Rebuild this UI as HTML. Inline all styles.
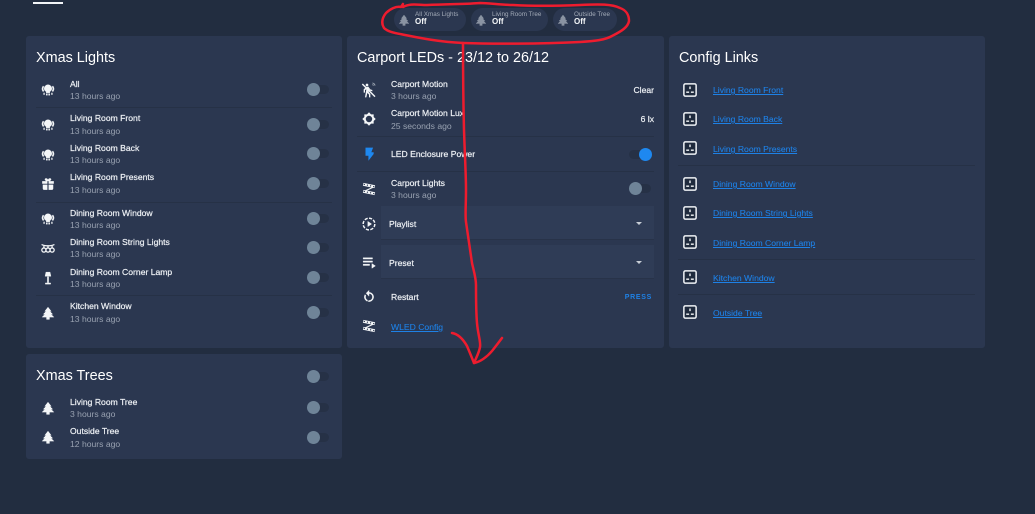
<!DOCTYPE html>
<html><head><meta charset="utf-8">
<style>
html,body{margin:0;padding:0}
body{width:1035px;height:514px;overflow:hidden;position:relative;background:#222d40;font-family:"Liberation Sans",sans-serif;color:#f2f4f7}
.c{position:absolute;background:#2b3750;border-radius:3px}
.h{position:absolute;font-size:14.4px;line-height:20px;color:#fff;white-space:nowrap}
.t{position:absolute;font-size:8.6px;line-height:12px;white-space:nowrap;color:#eef1f5;-webkit-text-stroke:.2px #eef1f5}
.s{position:absolute;font-size:8.6px;line-height:12px;white-space:nowrap;color:#99a2b1}
a.t{color:#1e81e6;text-decoration:underline;-webkit-text-stroke:.1px #1e81e6}
.d{position:absolute;height:1px;background:#263146}
.w{position:absolute;width:22px;height:9px;background:#263146;border-radius:5px}
.w i{position:absolute;left:0;top:-2px;width:13px;height:13px;border-radius:50%;background:#6f8498}
.w.on i{left:10px;background:#1e88f0}
svg.i{position:absolute;width:14px;height:14px;fill:#f4f6f8;stroke:#f4f6f8;stroke-width:.7}
svg.g{fill:#8a93a2;stroke:#8a93a2;width:12px;height:12px}
.sel{position:absolute;left:381px;width:273px;height:34px;background:#2f3c56;border-bottom:1px solid #283349;box-sizing:border-box}
.ar{position:absolute;width:0;height:0;border-left:3.5px solid transparent;border-right:3.5px solid transparent;border-top:3.5px solid #c8ced6}
.chip{position:absolute;top:8px;height:23px;border-radius:12px;background:#2b3750}
.cl{position:absolute;font-size:6.3px;line-height:9px;color:#a3abb8;white-space:nowrap;top:10px}
.cv{position:absolute;font-size:8px;line-height:10px;font-weight:bold;color:#f4f6f8;white-space:nowrap;top:17px}
</style></head>
<body>
<svg width="0" height="0" style="position:absolute">
<defs>
<symbol id="tree" viewBox="0 0 24 24"><path d="M9.500,23V19H2L7,14H4L9,9H6.500L12,2L17.500,9H15L20,14H17L22,19H14.500V23Z"/></symbol>
<symbol id="bulb" viewBox="0 0 24 24"><path d="M12,3A6.500,6.500 0 0,1 18.500,9.500C18.500,12 17,14 15,15V17H9V15C7,14 5.500,12 5.500,9.500A6.500,6.500 0 0,1 12,3M9,18.500H11V21H9V18.500M13,18.500H15V21H13V18.500M3.500,5L5,6.500C3.500,9 3.500,11 5,13.500L3.500,15C1,11.500 1,8.500 3.500,5M20.500,5C23,8.500 23,11.500 20.500,15L19,13.500C20.500,11 20.500,9 19,6.500L20.500,5M4.500,17H6V20H4.500V17M18,17H19.500V20H18V17Z"/></symbol>
<symbol id="gift" viewBox="0 0 24 24"><path d="M2,7H9C7,6 6,5 6.500,3.500C7,2 9.500,1.500 11,3L12,4.500L13,3C14.500,1.500 17,2 17.500,3.500C18,5 17,6 15,7H22V11.500H13V7H11V11.500H2V7M3,13H11V22H5A2,2 0 0,1 3,20V13M13,13H21V20A2,2 0 0,1 19,22H13V13Z" stroke="none"/></symbol>
<symbol id="string" viewBox="0 0 24 24"><g fill="none" stroke="#f4f6f8" stroke-width="2.200"><path d="M1,6C6,9 18,9 23,6"/><circle cx="5" cy="15.500" r="3.600"/><circle cx="12" cy="15.500" r="3.600"/><circle cx="19" cy="15.500" r="3.600"/><path d="M5,8V12M12,9V12M19,8V12"/></g></symbol>
<symbol id="lamp" viewBox="0 0 24 24"><path d="M8.500,2H15.500L17,9H7L8.500,2M11,10H13V20H11V10M7.500,20.500H16.500V22.500H7.500V20.500Z"/></symbol>
<symbol id="motion" viewBox="0 0 24 24"><path d="M9,2.500A2,2 0 1,1 9,6.500A2,2 0 1,1 9,2.500M7,8L11,7L14,11L17,12V14L13,13L12,11L11.500,15L14,18V23H12V19L9.500,16.500L8,23H6L8,11L6,12V16H4V11L7,8Z" stroke="none"/><path d="M2,3L21,22" stroke="#f4f6f8" stroke-width="2.200"/><path d="M17,1.500C19,1.500 21,3.500 21,5.500M17,4C18,4 18.500,4.500 18.500,5.500" fill="none" stroke="#aab2bd" stroke-width="1.300"/></symbol>
<symbol id="sun" viewBox="0 0 24 24"><path stroke="none" fill-rule="evenodd" d="M12,0.500L15.500,4H20V8.500L23.500,12L20,15.500V20H15.500L12,23.500L8.500,20H4V15.500L0.500,12L4,8.500V4H8.500L12,0.500M12,6.500A5.500,5.500 0 1,0 12,17.500A5.500,5.500 0 1,0 12,6.500Z"/></symbol>
<symbol id="strip" viewBox="0 0 24 24"><g fill="none"><path d="M2,4L22,8" stroke="#f4f6f8" stroke-width="5"/><path d="M2,16L22,20" stroke="#f4f6f8" stroke-width="5"/><path d="M19,9L6,15" stroke="#f4f6f8" stroke-width="2"/><path d="M3,4L21,8" stroke="#2b3750" stroke-width="2" stroke-dasharray="2 3.500"/><path d="M3,16L21,20" stroke="#2b3750" stroke-width="2" stroke-dasharray="2 3.500"/></g></symbol>
<symbol id="play" viewBox="0 0 24 24"><circle cx="12" cy="12" r="10" fill="none" stroke="#f4f6f8" stroke-width="2.500" stroke-dasharray="5.500 2.300"/><path d="M10,7.500L16.500,12L10,16.500Z"/></symbol>
<symbol id="list" viewBox="0 0 24 24"><path d="M2,3H18V5.200H2V3M2,8.500H18V10.700H2V8.500M2,14H13V16.200H2V14M17,13L23,17L17,21V13Z"/></symbol>
<symbol id="restart" viewBox="0 0 24 24"><path d="M12,4C14.100,4 16.100,4.800 17.600,6.300C20.700,9.400 20.700,14.500 17.600,17.600C15.800,19.500 13.300,20.200 10.900,19.900L11.400,17.900C13.100,18.100 14.900,17.500 16.200,16.200C18.500,13.900 18.500,10.100 16.200,7.700C15.100,6.600 13.500,6 12,6V10.600L7,5.600L12,0.600V4M6.300,17.600C3.700,15 3.300,11 5.100,7.900L6.600,9.400C5.500,11.600 5.900,14.400 7.800,16.200C8.300,16.700 8.900,17.100 9.600,17.400L9,19.400C8,19 7.100,18.400 6.300,17.600Z"/></symbol>
<symbol id="sock" viewBox="0 0 24 24"><rect x="1.500" y="1.500" width="21" height="21" rx="2.500" fill="#1f2a3d" stroke="#eef1f5" stroke-width="2.600"/><path stroke="none" d="M10.800,6H13.200V10.500H10.800V6M5.500,14.500H10.500V17H5.500V14.500M13.500,14.500H18.500V17H13.500V14.500Z"/></symbol>
<symbol id="flash" viewBox="0 0 24 24"><path stroke="none" fill="#1e88f0" d="M6,1H19L16,9H20V12L11,23.500V15H6V1Z"/></symbol>
</defs>
</svg>

<div style="position:absolute;left:33px;top:2px;width:30px;height:2px;background:#f2f4f7"></div>

<!-- chips -->
<div class="chip" style="left:394px;width:72px"></div>
<div class="chip" style="left:471px;width:77px"></div>
<div class="chip" style="left:553px;width:64px"></div>
<svg class="i g" style="left:398px;top:14px"><use href="#tree"/></svg>
<svg class="i g" style="left:475px;top:14px"><use href="#tree"/></svg>
<svg class="i g" style="left:557px;top:14px"><use href="#tree"/></svg>
<div class="cl" style="left:415px">All Xmas Lights</div><div class="cv" style="left:415px">Off</div>
<div class="cl" style="left:492px">Living Room Tree</div><div class="cv" style="left:492px">Off</div>
<div class="cl" style="left:574px">Outside Tree</div><div class="cv" style="left:574px">Off</div>

<!-- Card 1 -->
<div class="c" style="left:26px;top:36px;width:316px;height:312px"></div>
<div class="h" style="left:36px;top:48px">Xmas Lights</div>
<svg class="i" style="left:41px;top:83px"><use href="#bulb"/></svg>
<div class="t" style="left:70px;top:78px">All</div><div class="s" style="left:70px;top:90px">13 hours ago</div>
<div class="w" style="left:307px;top:85px"><i></i></div>
<div class="d" style="left:36px;top:107px;width:296px"></div>
<svg class="i" style="left:41px;top:118px"><use href="#bulb"/></svg>
<div class="t" style="left:70px;top:112px">Living Room Front</div><div class="s" style="left:70px;top:125px">13 hours ago</div>
<div class="w" style="left:307px;top:120px"><i></i></div>
<svg class="i" style="left:41px;top:148px"><use href="#bulb"/></svg>
<div class="t" style="left:70px;top:142px">Living Room Back</div><div class="s" style="left:70px;top:154px">13 hours ago</div>
<div class="w" style="left:307px;top:149px"><i></i></div>
<svg class="i" style="left:41px;top:177px"><use href="#gift"/></svg>
<div class="t" style="left:70px;top:171px">Living Room Presents</div><div class="s" style="left:70px;top:184px">13 hours ago</div>
<div class="w" style="left:307px;top:179px"><i></i></div>
<div class="d" style="left:36px;top:202px;width:296px"></div>
<svg class="i" style="left:41px;top:212px"><use href="#bulb"/></svg>
<div class="t" style="left:70px;top:207px">Dining Room Window</div><div class="s" style="left:70px;top:219px">13 hours ago</div>
<div class="w" style="left:307px;top:214px"><i></i></div>
<svg class="i" style="left:41px;top:241px"><use href="#string"/></svg>
<div class="t" style="left:70px;top:236px">Dining Room String Lights</div><div class="s" style="left:70px;top:248px">13 hours ago</div>
<div class="w" style="left:307px;top:243px"><i></i></div>
<svg class="i" style="left:41px;top:271px"><use href="#lamp"/></svg>
<div class="t" style="left:70px;top:266px">Dining Room Corner Lamp</div><div class="s" style="left:70px;top:278px">13 hours ago</div>
<div class="w" style="left:307px;top:273px"><i></i></div>
<div class="d" style="left:36px;top:295px;width:296px"></div>
<svg class="i" style="left:41px;top:306px"><use href="#tree"/></svg>
<div class="t" style="left:70px;top:300px">Kitchen Window</div><div class="s" style="left:70px;top:313px">13 hours ago</div>
<div class="w" style="left:307px;top:308px"><i></i></div>

<!-- Card 4 -->
<div class="c" style="left:26px;top:354px;width:316px;height:105px"></div>
<div class="h" style="left:36px;top:366px">Xmas Trees</div>
<div class="w" style="left:307px;top:372px"><i></i></div>
<svg class="i" style="left:41px;top:401px"><use href="#tree"/></svg>
<div class="t" style="left:70px;top:396px">Living Room Tree</div><div class="s" style="left:70px;top:408px">3 hours ago</div>
<div class="w" style="left:307px;top:403px"><i></i></div>
<svg class="i" style="left:41px;top:430px"><use href="#tree"/></svg>
<div class="t" style="left:70px;top:425px">Outside Tree</div><div class="s" style="left:70px;top:438px">12 hours ago</div>
<div class="w" style="left:307px;top:433px"><i></i></div>

<!-- Card 2 -->
<div class="c" style="left:347px;top:36px;width:317px;height:312px"></div>
<div class="h" style="left:357px;top:48px">Carport LEDs - 23/12 to 26/12</div>
<svg class="i" style="left:361px;top:82px;width:16px;height:16px"><use href="#motion"/></svg>
<div class="t" style="left:391px;top:78px">Carport Motion</div><div class="s" style="left:391px;top:90px">3 hours ago</div>
<div class="t" style="right:381px;top:84px">Clear</div>
<svg class="i" style="left:362px;top:112px"><use href="#sun"/></svg>
<div class="t" style="left:391px;top:107px">Carport Motion Lux</div><div class="s" style="left:391px;top:120px">25 seconds ago</div>
<div class="t" style="right:381px;top:113px">6 lx</div>
<div class="d" style="left:357px;top:136px;width:297px"></div>
<svg class="i" style="left:362px;top:147px"><use href="#flash"/></svg>
<div class="t" style="left:391px;top:148px">LED Enclosure Power</div>
<div class="w on" style="left:629px;top:150px"><i></i></div>
<div class="d" style="left:357px;top:171px;width:297px"></div>
<svg class="i" style="left:362px;top:182px"><use href="#strip"/></svg>
<div class="t" style="left:391px;top:177px">Carport Lights</div><div class="s" style="left:391px;top:189px">3 hours ago</div>
<div class="w" style="left:629px;top:184px"><i></i></div>
<svg class="i" style="left:362px;top:217px"><use href="#play"/></svg>
<div class="sel" style="top:206px"></div>
<div class="t" style="left:389px;top:218px">Playlist</div>
<div class="ar" style="left:636px;top:222px"></div>
<svg class="i" style="left:362px;top:256px"><use href="#list"/></svg>
<div class="sel" style="top:245px"></div>
<div class="t" style="left:389px;top:257px">Preset</div>
<div class="ar" style="left:636px;top:261px"></div>
<svg class="i" style="left:362px;top:290px"><use href="#restart"/></svg>
<div class="t" style="left:391px;top:291px">Restart</div>
<div class="t" style="right:383px;top:292px;color:#1e81e6;-webkit-text-stroke:0;font-size:7px;font-weight:bold;letter-spacing:.7px">PRESS</div>
<svg class="i" style="left:362px;top:319px"><use href="#strip"/></svg>
<a class="t" style="left:391px;top:321px">WLED Config</a>

<!-- Card 3 -->
<div class="c" style="left:669px;top:36px;width:316px;height:312px"></div>
<div class="h" style="left:679px;top:48px">Config Links</div>
<svg class="i" style="left:683px;top:83px"><use href="#sock"/></svg><a class="t" style="left:713px;top:84px">Living Room Front</a>
<svg class="i" style="left:683px;top:112px"><use href="#sock"/></svg><a class="t" style="left:713px;top:113px">Living Room Back</a>
<svg class="i" style="left:683px;top:141px"><use href="#sock"/></svg><a class="t" style="left:713px;top:143px">Living Room Presents</a>
<div class="d" style="left:678px;top:165px;width:297px"></div>
<svg class="i" style="left:683px;top:177px"><use href="#sock"/></svg><a class="t" style="left:713px;top:178px">Dining Room Window</a>
<svg class="i" style="left:683px;top:206px"><use href="#sock"/></svg><a class="t" style="left:713px;top:207px">Dining Room String Lights</a>
<svg class="i" style="left:683px;top:235px"><use href="#sock"/></svg><a class="t" style="left:713px;top:237px">Dining Room Corner Lamp</a>
<div class="d" style="left:678px;top:259px;width:297px"></div>
<svg class="i" style="left:683px;top:270px"><use href="#sock"/></svg><a class="t" style="left:713px;top:272px">Kitchen Window</a>
<div class="d" style="left:678px;top:294px;width:297px"></div>
<svg class="i" style="left:683px;top:305px"><use href="#sock"/></svg><a class="t" style="left:713px;top:307px">Outside Tree</a>

<!-- Red annotation -->
<svg style="position:absolute;left:0;top:0" width="1035" height="514" fill="none" stroke="#ee1c2e" stroke-width="2.500" stroke-linecap="round" stroke-linejoin="round">
<path d="M403,4L401,7C396,6 390,9 386,13C382,18 381,23 384,28C388,32 395,33 405,35C420,38 440,42 463,43C490,44 540,44 580,42C595,41 605,40 612,36C622,31 628,27 629,21C629,15 626,10 620,8C612,4 600,4 580,5C555,6 530,6 513,5C500,5 490,3 480,3C470,4 450,4 427,5C418,5 410,3 403,7"/>
<path d="M463,43C463,65 463,90 464,130C465,160 466,175 466,190C466,205 465,215 466,222C468,235 470,250 472,263C474,272 476,278 476,285C476,300 476,312 477,323C478,335 481,342 480,347C479,353 476,358 474,363"/>
<path d="M452,333C458,334 463,339 467,346C470,353 472,358 474,363C480,362 487,357 492,351C496,346 499,342 502,338"/>
</svg>
</body></html>
